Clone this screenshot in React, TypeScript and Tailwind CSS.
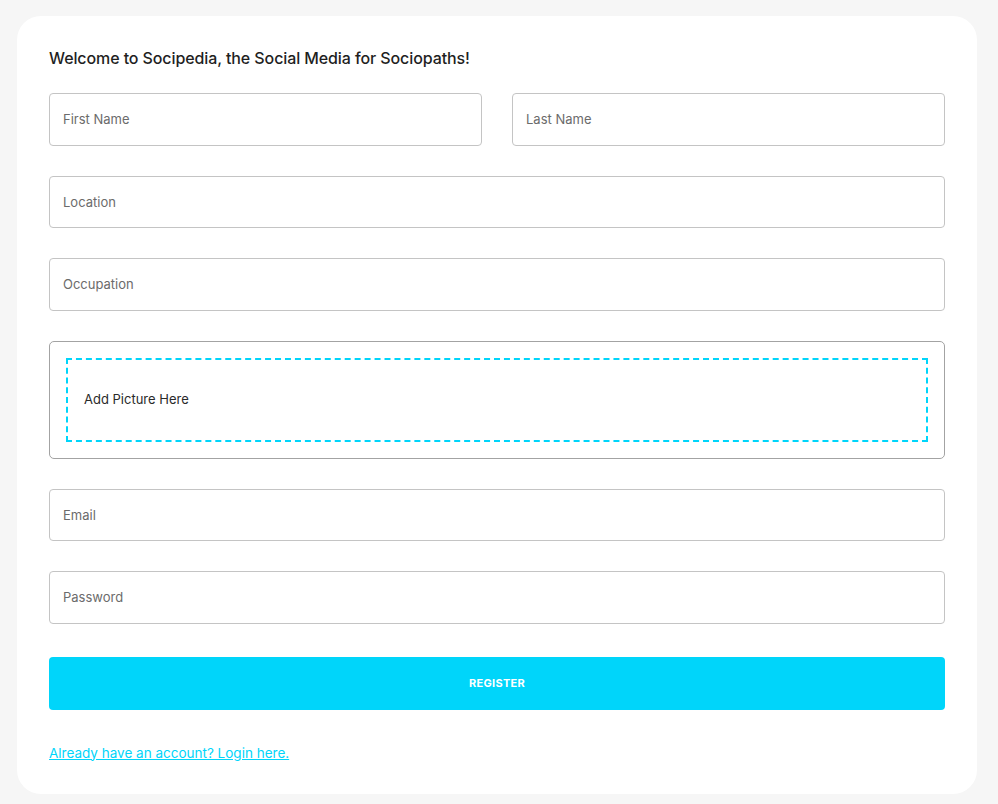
import React, {useState} from 'react';

type Field = {
    name: string
    label: string
}

function Input(props: Field & {value: string, onChange: (v: string) => void, type?: string}) {
    return (
        <input
            type={props.type ?? "text"}
            placeholder={props.label}
            value={props.value}
            onChange={(e) => props.onChange(e.target.value)}
            className="h-[52.5px] w-full rounded-[4px] border border-[#c4c4c4] bg-white px-[13px] text-[13px] text-[#222] placeholder:text-[#6b6b6b] outline-none"
        />
    );
}

export default function App() {
    const [values, setValues] = useState<Record<string, string>>({});
    const set = (k: string) => (v: string) => setValues(prev => ({...prev, [k]: v}));

    return (
        <div className="min-h-[804px] w-full bg-[#f6f6f6] px-[17px] pt-[16px] pb-[10px]" style={{fontFamily: 'Inter, "Open Sans", sans-serif'}}>
            <div className="w-[960px] rounded-[24px] bg-white px-[32px] pt-[32px] pb-[31px]">
                <h1 className="text-[16px] font-medium leading-[20px] text-[#1f1f1f] mb-[25px] tracking-[-0.1px]">
                    Welcome to Socipedia, the Social Media for Sociopaths!
                </h1>
                <div className="flex flex-col gap-[30px]">
                    <div className="grid grid-cols-2 gap-[30px]">
                        <Input name="firstName" label="First Name" value={values.firstName ?? ""} onChange={set("firstName")}/>
                        <Input name="lastName" label="Last Name" value={values.lastName ?? ""} onChange={set("lastName")}/>
                    </div>
                    <Input name="location" label="Location" value={values.location ?? ""} onChange={set("location")}/>
                    <Input name="occupation" label="Occupation" value={values.occupation ?? ""} onChange={set("occupation")}/>
                    <div className="h-[118px] rounded-[5px] border border-[#a3a3a3] p-[16px]">
                        <div className="flex h-[84px] items-center border-2 border-dashed border-[#00d5fa] px-[16px] cursor-pointer">
                            <p className="text-[13px] text-[#2a2a2a]">Add Picture Here</p>
                        </div>
                    </div>
                    <Input name="email" label="Email" value={values.email ?? ""} onChange={set("email")}/>
                    <Input name="password" label="Password" type="password" value={values.password ?? ""} onChange={set("password")}/>
                </div>
                <button className="mt-[33px] h-[53px] w-full rounded-[4px] bg-[#00d5fa] text-[11px] font-bold tracking-[0.3px] text-white">
                    REGISTER
                </button>
                <div className="mt-[32px] leading-[20px]">
                    <a href="#" className="text-[13.5px] text-[#00d5fa] underline">
                        Already have an account? Login here.
                    </a>
                </div>
            </div>
        </div>
    );
}
